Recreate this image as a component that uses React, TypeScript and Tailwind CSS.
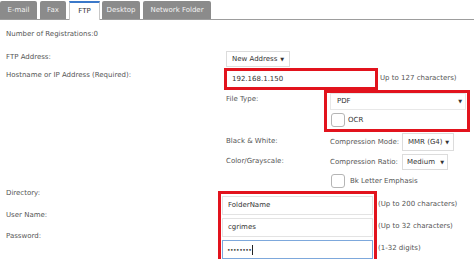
import React from 'react'

const tabs = ['E-mail', 'Fax', 'FTP', 'Desktop', 'Network Folder']
const tabWidths: Record<string, string> = {
  'E-mail': 'w-[37px]',
  Fax: 'w-[26px]',
  FTP: 'w-[31px]',
  Desktop: 'w-[38px]',
  'Network Folder': 'w-[68px]',
}

function Arrow() {
  return <span className="text-[5px] text-[#333]">▼</span>
}

function Checkbox() {
  return <span className="block w-[14px] h-[14px] rounded-[3px] border border-[#b5b5b5] bg-white" />
}

export default function App() {
  return (
    <div className="w-[474px] h-[259px] overflow-hidden bg-white text-[7px] leading-[7px] text-[#555] font-['DejaVu_Sans',sans-serif]">
      {/* tabs */}
      <div className="flex items-end h-[20px] border-b border-[#9d9d9d]">
        {tabs.map(t =>
          t === 'FTP' ? (
            <div
              key={t}
              className={`${tabWidths[t]} h-[19px] -mb-px mr-[2px] flex items-center justify-center bg-white border-t-2 border-x border-t-[#3a78c9] border-x-[#c8c8c8] text-[#333]`}
            >
              {t}
            </div>
          ) : (
            <div
              key={t}
              className={`${tabWidths[t]} h-[18px] mr-[3px] flex items-center justify-center rounded-t-[2px] bg-[#8b8b8b] text-[#f2f2f2]`}
            >
              {t}
            </div>
          )
        )}
      </div>

      <div className="h-[31px] pl-[6px] pt-[11px]">Number of Registrations:0</div>

      {/* FTP address */}
      <div className="flex h-[17px]">
        <div className="w-[226px] pl-[6px] pt-[3px]">FTP Address:</div>
        <div className="w-[64px] h-[16px] flex items-center justify-between px-[5px] border border-[#dcdcdc] text-[#333]">
          <span>New Address</span>
          <Arrow />
        </div>
      </div>

      {/* hostname */}
      <div className="flex h-[22px]">
        <div className="w-[224px] pl-[6px] pt-[4px]">Hostname or IP Address (Required):</div>
        <div className="w-[154px] h-[22px] border-[3px] border-[#e2131d] bg-white flex items-center pl-[5px] text-[#333]">
          192.168.1.150
        </div>
        <div className="pl-[2px] pt-[7px]">Up to 127 characters)</div>
      </div>

      {/* file type */}
      <div className="flex h-[42px]">
        <div className="w-[226px]" />
        <div className="w-[98px] pt-[6px]">File Type:</div>
        <div className="w-[146px] h-[42px] border-[3px] border-[#e2131d] pl-[3px] flex flex-col">
          <div className="w-[136px] h-[17px] flex items-center justify-between pl-[6px] pr-[3px] border border-[#e8e8e8] text-[#333]">
            <span>PDF</span>
            <Arrow />
          </div>
          <div className="flex items-center gap-[3px] mt-[3px] pl-[1px] text-[#333]">
            <Checkbox />
            <span>OCR</span>
          </div>
        </div>
      </div>

      {/* black & white */}
      <div className="flex h-[20px]">
        <div className="w-[226px]" />
        <div className="w-[104px] pt-[6px]">Black &amp; White:</div>
        <div className="w-[72px] pt-[7px]">Compression Mode:</div>
        <div className="w-[52px] h-[18px] mt-[1px] flex items-center justify-between pl-[5px] pr-[4px] border border-[#dcdcdc] text-[#333]">
          <span>MMR (G4)</span>
          <Arrow />
        </div>
      </div>

      {/* color */}
      <div className="flex h-[20px]">
        <div className="w-[226px]" />
        <div className="w-[104px] pt-[6px]">Color/Grayscale:</div>
        <div className="w-[72px] pt-[7px]">Compression Ratio:</div>
        <div className="w-[46px] h-[16px] mt-[2px] flex items-center justify-between pl-[4px] pr-[3px] border border-[#dcdcdc] text-[#333]">
          <span>Medium</span>
          <Arrow />
        </div>
      </div>

      {/* bk letter */}
      <div className="flex h-[18px] items-start">
        <div className="w-[331px]" />
        <div className="mt-[2px] flex items-center gap-[5px]">
          <Checkbox />
          <span>Bk Letter Emphasis</span>
        </div>
      </div>

      {/* directory / user / password */}
      <div className="flex">
        <div className="w-[218px] pl-[6px] flex flex-col">
          <div className="h-[22px]">Directory:</div>
          <div className="h-[21px]">User Name:</div>
          <div className="h-[22px]">Password:</div>
        </div>
        <div className="w-[159px] mt-[1px] border-[3px] border-[#e2131d] pt-[2px] pb-[4px] px-[1px] flex flex-col gap-[3px]">
          <div className="h-[19px] flex items-center pl-[5px] border border-[#e3e3e3] text-[#333]">FolderName</div>
          <div className="h-[19px] flex items-center pl-[5px] border border-[#e3e3e3] text-[#333]">cgrimes</div>
          <div className="h-[19px] flex items-center pl-[4px] border border-[#7da8dc] text-[#333]">
            <span className="text-[6px] tracking-[-0.5px]">••••••••</span>
            <span className="ml-[1px] w-px h-[10px] bg-[#222]" />
          </div>
        </div>
        <div className="pl-[1px] pt-[11px] flex flex-col">
          <div className="h-[22px]">(Up to 200 characters)</div>
          <div className="h-[22px]">(Up to 32 characters)</div>
          <div className="h-[22px]">(1-32 digits)</div>
        </div>
      </div>
    </div>
  )
}
